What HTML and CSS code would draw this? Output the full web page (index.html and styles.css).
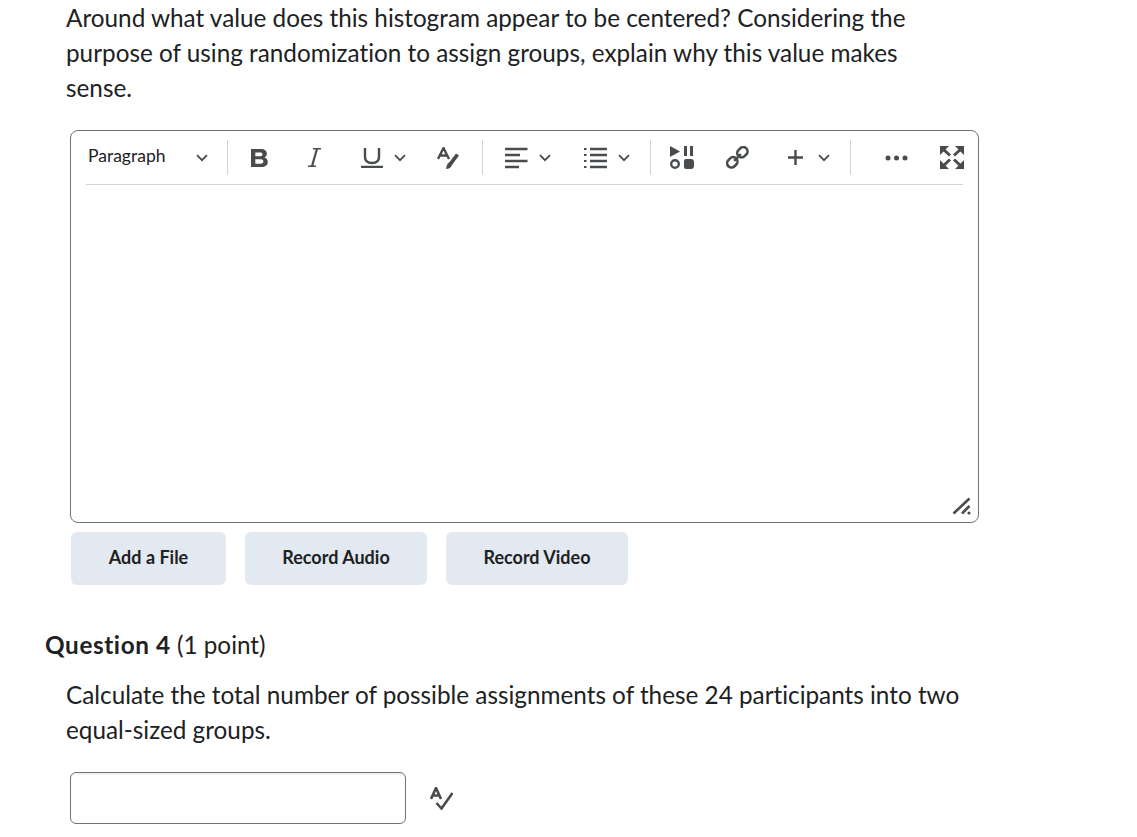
FILE: index.html
```html
<!DOCTYPE html>
<html lang="en">
<head>
<meta charset="utf-8">
<title>Question</title>
<link rel="stylesheet" href="styles.css">
</head>
<body>
<main class="page">
  <p class="prompt">Around what value does this histogram appear to be centered? Considering the purpose of using randomization to assign groups, explain why this value makes sense.</p>
  <section class="editor">
    <div class="toolbar">
      <div class="tool-select"><span class="para">Paragraph</span>
        <svg class="chev" viewBox="0 0 12 8"><path d="M1 1.200 6 6.200 11 1.200"/></svg></div>
      <span class="sep sep-a"></span>
      <svg class="ic ic-b" viewBox="1 1 15 16" preserveAspectRatio="none"><path class="fill" fill-rule="evenodd" d="M1 1h9c3 0 5 1.500 5 4.200 0 1.600-.9 2.800-2.300 3.400 1.900.5 3.100 1.900 3.100 3.900 0 3-2.300 4.500-5.500 4.500H1zM4.800 4v3.400h4.400c1.200 0 1.900-.6 1.900-1.700S10.400 4 9.200 4zm0 6.200V14h4.900c1.400 0 2.200-.7 2.200-1.900s-.8-1.900-2.200-1.900z"/></svg>
      <svg class="ic ic-i" viewBox="0 0 13 19"><path class="thin" d="M5 .8h8M0 18.200h8"/><path class="mid" d="M9 .8 4 18.200"/></svg>
      <svg class="ic ic-u" viewBox="0 0 22 20"><path class="line" d="M4 0v9c0 4 2.500 6 7 6s7-2 7-6V0M0 19h22"/></svg>
      <svg class="chev chev-u" viewBox="0 0 12 8"><path d="M1 1.200 6 6.200 11 1.200"/></svg>
      <svg class="ic ic-a" viewBox="0 0 22 22"><path class="line" d="M1 12 6.500 1 12 12M2.800 8.500h7.400"/><path class="fill" d="M19 6.500l3 2L15 18c-1 3-4 4-6 4 .5-3 1-5.500 3.500-7z"/></svg>
      <span class="sep sep-b"></span>
      <svg class="ic ic-align" viewBox="0 0 23 22"><path class="line" d="M0 2h22.500M0 8h15M0 14h22.500M0 20h14"/></svg>
      <svg class="chev chev-al" viewBox="0 0 12 8"><path d="M1 1.200 6 6.200 11 1.200"/></svg>
      <svg class="ic ic-list" viewBox="0 0 23 22"><path class="line" d="M6 2h17M6 8h17M6 14h17M6 20h17"/><path class="fill" d="M0 1h2.500v2H0zM0 7h2.500v2H0zM0 13h2.500v2H0zM0 19h2.500v2H0z"/></svg>
      <svg class="chev chev-li" viewBox="0 0 12 8"><path d="M1 1.200 6 6.200 11 1.200"/></svg>
      <span class="sep sep-c"></span>
      <svg class="ic ic-media" viewBox="0 0 24 23"><path class="fill" d="M0 0l10 5.500L0 11zM14 0h3v10h-3zM20 0h3v10h-3zM16 13h5a3 3 0 0 1 3 3v4a3 3 0 0 1-3 3h-5a2 2 0 0 1-2-2v-6a2 2 0 0 1 2-2z"/><circle class="line" cx="5" cy="18" r="3.800"/></svg>
      <svg class="ic ic-link" viewBox="0 0 24 24"><g class="line link-g"><rect x="1" y="12.500" width="11.500" height="9" rx="4.500" transform="rotate(-45 6.700 17.200)"/><rect x="11.500" y="2" width="11.500" height="9" rx="4.500" transform="rotate(-45 17.200 6.700)"/><path d="M8.500 15.500l7-7"/></g></svg>
      <svg class="ic ic-plus" viewBox="0 0 15 15"><path class="line" d="M7.500 0v15M0 7.500h15"/></svg>
      <svg class="chev chev-pl" viewBox="0 0 12 8"><path d="M1 1.200 6 6.200 11 1.200"/></svg>
      <span class="sep sep-d"></span>
      <svg class="ic ic-more" viewBox="0 0 23 6"><circle class="fill" cx="3" cy="3" r="2.500"/><circle class="fill" cx="11.500" cy="3" r="2.500"/><circle class="fill" cx="20" cy="3" r="2.500"/></svg>
      <svg class="ic ic-full" viewBox="0 0 24 23"><path class="fill" d="M0 0h9L0 9zM24 0h-9l9 9zM0 23h9l-9-9zM24 23h-9l9-9z"/><path class="arrow" d="M3 3l7 6.500M21 3l-7 6.500M3 20l7-6.500M21 20l-7-6.500"/></svg>
    </div>
    <div class="edit-area"></div>
    <svg class="grip" viewBox="0 0 19 18"><path class="grip-line" d="M1.500 16.500 17.500 1.500M10 16.500l7.500-7.500"/><circle class="fill" cx="17" cy="16" r="1.600"/></svg>
  </section>
  <div class="actions">
    <button class="btn btn-file">Add a File</button>
    <button class="btn btn-rec">Record Audio</button>
    <button class="btn btn-rec">Record Video</button>
  </div>
  <h2 class="qhead"><strong>Question 4</strong> <span>(1 point)</span></h2>
  <p class="prompt prompt-q4">Calculate the total number of possible assignments of these 24 participants into two equal-sized groups.</p>
  <div class="answer">
    <input class="answer-input" type="text" aria-label="Answer">
    <svg class="ic-check" viewBox="0 0 23 23"><path class="check-line" d="M1 12 6 1l5 11M2.800 8.500h6.400M6.500 16l5 5.500L22.500 6"/></svg>
  </div>
</main>
</body>
</html>
```
FILE: styles.css
```css
* { box-sizing: border-box; }
html, body { margin: 0; padding: 0; background: #fff; height: 837px; overflow: hidden; }
body { font-family: Lato, "Open Sans", sans-serif; color: #202122; font-variant-ligatures: none; }
.page { padding: 0 0 0 45px; }
.prompt {
  margin: 0 0 0 21px;
  width: 860px;
  font-size: 24.3px;
  line-height: 35px;
}
.editor {
  position: relative;
  margin: 25px 0 0 25px;
  width: 909px;
  height: 393px;
  border: 1px solid #6e7477;
  border-radius: 8px;
  padding: 0 15px;
}
.toolbar {
  display: flex;
  align-items: center;
  height: 54px;
  border-bottom: 1px solid #cdd5dc;
}
.para { font-size: 17.5px; color: #202122; padding-bottom: 4px; }
.tool-select { display: flex; flex: none; align-items: center; justify-content: space-between; margin-left: 2px; width: 120px; }
.chev { width: 12px; height: 8px; flex: none; }
.chev path { fill: none; stroke: #494c4e; stroke-width: 1.800; }
.sep { width: 1px; height: 35px; background: #cdd5dc; flex: none; }
.ic { flex: none; }
.fill { fill: #494c4e; }
.line { fill: none; stroke: #494c4e; stroke-width: 2.400; }
.link-g { stroke-width: 2.700; }
.check-line { fill: none; stroke: #494c4e; stroke-width: 2.600; }
.thin { fill: none; stroke: #494c4e; stroke-width: 1.500; }
.mid { fill: none; stroke: #494c4e; stroke-width: 2.200; }
.arrow { fill: none; stroke: #494c4e; stroke-width: 3; }
.grip-line { fill: none; stroke: #494c4e; stroke-width: 2.600; }
.sep-a { margin-left: 19px; }
.ic-b { width: 17px; height: 18px; margin-left: 23px; }
.ic-i { width: 13px; height: 19px; margin-left: 40px; }
.ic-u { width: 22px; height: 20px; margin-left: 40px; }
.chev-u { margin-left: 11px; }
.ic-a { width: 22px; height: 22px; margin-left: 31px; }
.sep-b { margin-left: 23px; }
.ic-align { width: 23px; height: 22px; margin-left: 22px; }
.chev-al { margin-left: 11px; }
.ic-list { width: 23px; height: 22px; margin-left: 33px; }
.chev-li { margin-left: 11px; }
.sep-c { margin-left: 20px; }
.ic-media { width: 24px; height: 23px; margin-left: 19px; }
.ic-link { width: 23px; height: 23px; margin-left: 32px; }
.ic-plus { width: 15px; height: 15px; margin-left: 39px; }
.chev-pl { margin-left: 15px; }
.sep-d { margin-left: 20px; }
.ic-more { width: 23px; height: 6px; margin-left: 34px; }
.ic-full { width: 24px; height: 23px; margin-left: 32px; }
.grip { position: absolute; right: 7px; bottom: 7px; width: 19px; height: 18px; }
.actions { display: flex; gap: 19px; margin: 9px 0 0 26px; }
.btn {
  height: 53px;
  border: 0;
  border-radius: 6px;
  background: #e3e9f1;
  color: #202122;
  font: 700 18px Lato, sans-serif;
  padding: 0 0 3px;
}
.btn-file { width: 155px; }
.btn-rec { width: 182px; }
.qhead { margin: 42px 0 0; font-size: 24.3px; line-height: 35px; font-weight: 400; }
.qhead strong { font-weight: 700; letter-spacing: .6px; }
.prompt-q4 { margin-top: 15px; width: 900px; }
.answer { display: flex; align-items: center; margin: 25px 0 0 25px; }
.answer-input {
  width: 336px;
  height: 52px;
  border: 1px solid #6e7477;
  border-radius: 6px;
  background: #fff;
  box-shadow: inset 0 2px 1px rgba(0,0,0,.05);
}
.ic-check { width: 23px; height: 23px; margin-left: 24px; }
```
